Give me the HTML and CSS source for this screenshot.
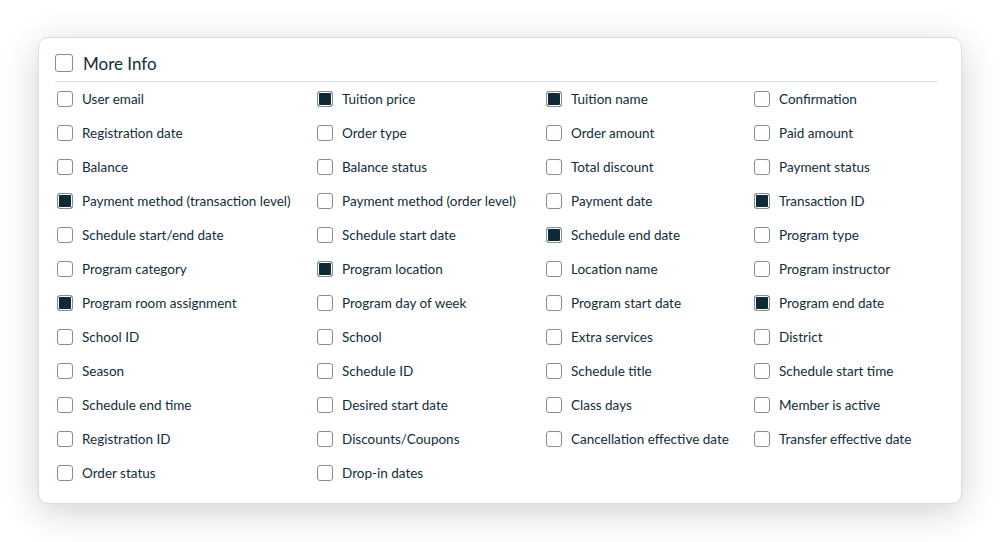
FILE: index.html
```html
<!DOCTYPE html>
<html lang="en">
<head>
  <meta charset="UTF-8">
  <meta name="viewport" content="width=device-width, initial-scale=1.0">
  <title>More Info</title>
  <link rel="stylesheet" href="styles.css">
</head>
<body>
  <div class="card">
    <label class="group-head">
      <span class="box big"></span>
      <span>More Info</span>
    </label>
    <div class="options">
      <label class="opt"><span class="box"></span>User email</label>
      <label class="opt"><span class="box on"></span>Tuition price</label>
      <label class="opt"><span class="box on"></span>Tuition name</label>
      <label class="opt"><span class="box"></span>Confirmation</label>

      <label class="opt"><span class="box"></span>Registration date</label>
      <label class="opt"><span class="box"></span>Order type</label>
      <label class="opt"><span class="box"></span>Order amount</label>
      <label class="opt"><span class="box"></span>Paid amount</label>

      <label class="opt"><span class="box"></span>Balance</label>
      <label class="opt"><span class="box"></span>Balance status</label>
      <label class="opt"><span class="box"></span>Total discount</label>
      <label class="opt"><span class="box"></span>Payment status</label>

      <label class="opt"><span class="box on"></span>Payment method (transaction level)</label>
      <label class="opt"><span class="box"></span>Payment method (order level)</label>
      <label class="opt"><span class="box"></span>Payment date</label>
      <label class="opt"><span class="box on"></span>Transaction ID</label>

      <label class="opt"><span class="box"></span>Schedule start/end date</label>
      <label class="opt"><span class="box"></span>Schedule start date</label>
      <label class="opt"><span class="box on"></span>Schedule end date</label>
      <label class="opt"><span class="box"></span>Program type</label>

      <label class="opt"><span class="box"></span>Program category</label>
      <label class="opt"><span class="box on"></span>Program location</label>
      <label class="opt"><span class="box"></span>Location name</label>
      <label class="opt"><span class="box"></span>Program instructor</label>

      <label class="opt"><span class="box on"></span>Program room assignment</label>
      <label class="opt"><span class="box"></span>Program day of week</label>
      <label class="opt"><span class="box"></span>Program start date</label>
      <label class="opt"><span class="box on"></span>Program end date</label>

      <label class="opt"><span class="box"></span>School ID</label>
      <label class="opt"><span class="box"></span>School</label>
      <label class="opt"><span class="box"></span>Extra services</label>
      <label class="opt"><span class="box"></span>District</label>

      <label class="opt"><span class="box"></span>Season</label>
      <label class="opt"><span class="box"></span>Schedule ID</label>
      <label class="opt"><span class="box"></span>Schedule title</label>
      <label class="opt"><span class="box"></span>Schedule start time</label>

      <label class="opt"><span class="box"></span>Schedule end time</label>
      <label class="opt"><span class="box"></span>Desired start date</label>
      <label class="opt"><span class="box"></span>Class days</label>
      <label class="opt"><span class="box"></span>Member is active</label>

      <label class="opt"><span class="box"></span>Registration ID</label>
      <label class="opt"><span class="box"></span>Discounts/Coupons</label>
      <label class="opt"><span class="box"></span>Cancellation effective date</label>
      <label class="opt"><span class="box"></span>Transfer effective date</label>

      <label class="opt"><span class="box"></span>Order status</label>
      <label class="opt"><span class="box"></span>Drop-in dates</label>
    </div>
  </div>
</body>
</html>
```

FILE: styles.css
```css
html, body {
  height: 100%;
}

body {
  margin: 0;
  padding-top: 37px;
  box-sizing: border-box;
  background: #ffffff;
  font-family: Lato, "Noto Sans", sans-serif;
  color: #0f2e3c;
}

.card {
  margin-left: 38px;
  width: 924px;
  height: 467px;
  box-sizing: border-box;
  background: #ffffff;
  border: 1px solid #d8dcde;
  border-radius: 10px;
  box-shadow: 0 8px 36px rgba(0, 0, 0, 0.18);
  padding: 15px 23px 0 16px;
}

.group-head {
  display: flex;
  align-items: center;
  gap: 10px;
  font-size: 17px;
  height: 20px;
  padding-bottom: 8px;
  border-bottom: 1px solid #dde4e7;
}

.options {
  display: grid;
  grid-template-columns: 260px 229px 208px 1fr;
  grid-auto-rows: 34px;
  padding-left: 2px;
}

.opt {
  display: flex;
  align-items: center;
  gap: 9px;
  font-size: 13.5px;
  white-space: nowrap;
}

.box {
  width: 16px;
  height: 16px;
  box-sizing: border-box;
  border: 1.5px solid #7f9099;
  border-radius: 3px;
  flex-shrink: 0;
  background: #ffffff;
}

.box.big {
  width: 18px;
  height: 18px;
}

.box.on {
  background: #0e2a37;
  box-shadow: inset 0 0 0 1px #ffffff;
}
```
